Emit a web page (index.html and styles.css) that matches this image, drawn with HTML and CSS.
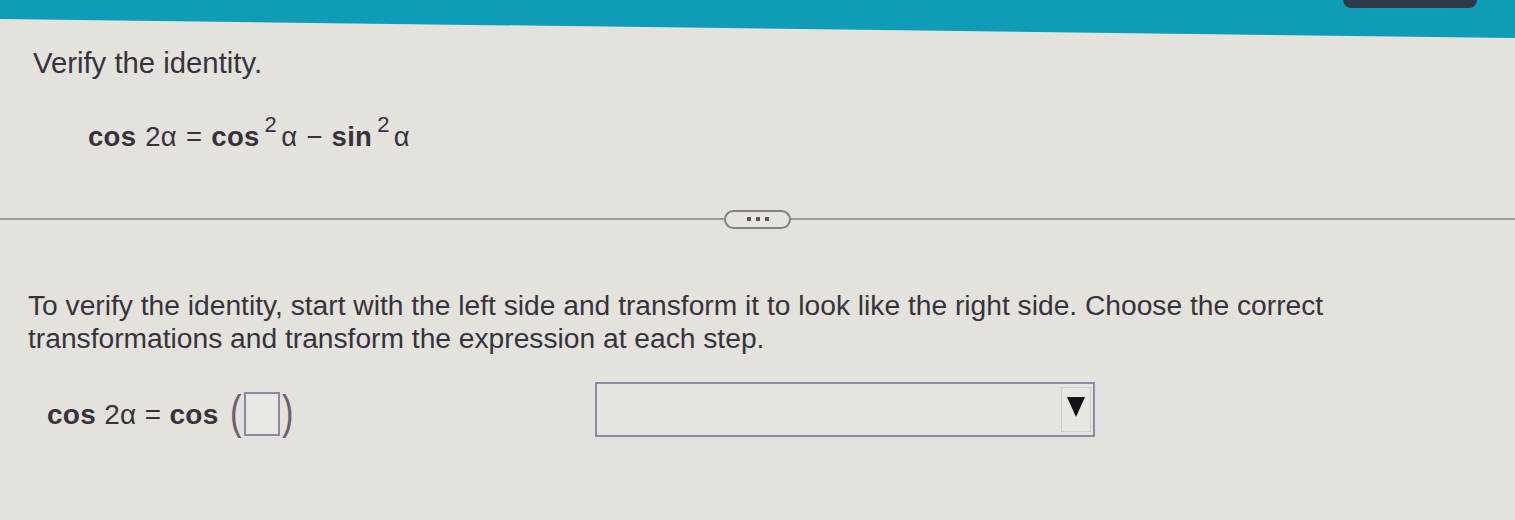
FILE: index.html
```html
<!DOCTYPE html>
<html lang="en">
<head>
<meta charset="utf-8">
<title>Verify the identity</title>
<link rel="stylesheet" href="styles.css">
</head>
<body>
<header class="topbar">
  <div class="topbtn"></div>
</header>
<main class="content">
  <section class="question">
    <p class="prompt">Verify the identity.</p>
    <p class="equation"><span class="fn">cos</span> 2α = <span class="fn">cos</span><sup>2</sup>α − <span class="fn">sin</span><sup>2</sup>α</p>
  </section>
  <div class="divider">
    <span class="line"></span>
    <button class="more" type="button" aria-label="more"><i></i><i></i><i></i></button>
    <span class="line"></span>
  </div>
  <section class="answer">
    <p class="instructions">To verify the identity, start with the left side and transform it to look like the right side. Choose the correct transformations and transform the expression at each step.</p>
    <div class="step">
      <div class="expr"><span class="fn">cos</span> 2α = <span class="fn">cos</span><span class="paren open">(</span><span class="box"></span><span class="paren">)</span></div>
      <div class="select">
        <span class="arrow"><i class="tri"></i></span>
      </div>
    </div>
  </section>
</main>
</body>
</html>
```
FILE: styles.css
```css
* { box-sizing: border-box; }
html, body { margin: 0; padding: 0; }
body {
  background: #e4e2dc;
  font-family: "Liberation Sans", Arial, sans-serif;
  color: #38323e;
  width: 1515px;
  height: 520px;
  overflow: hidden;
}
.topbar {
  height: 38px;
  background: #0f9cb6;
  clip-path: polygon(0 0, 100% 0, 100% 38px, 0 19px);
  display: flex;
  justify-content: flex-end;
  padding-right: 38px;
}
.topbtn {
  width: 134px;
  height: 8px;
  background: #2e3a47;
  border-radius: 0 0 14px 14px;
}
.content { display: flex; flex-direction: column; }
.question { padding-left: 33px; }
.prompt {
  margin: 8px 0 0;
  font-size: 29.3px;
  line-height: 34px;
}
.equation {
  margin: 40px 0 0 55px;
  font-size: 27.5px;
  line-height: 34px;
  letter-spacing: 0.3px;
  word-spacing: 1px;
}
.fn { font-weight: bold; }
.equation sup {
  font-size: 22px;
  font-weight: normal;
  line-height: 0;
  vertical-align: 14px;
  margin: 0 4px 0 5px;
}
.divider {
  display: flex;
  align-items: center;
  margin-top: 55px;
  height: 20px;
}
.divider .line {
  flex: 1;
  height: 2px;
  background: #9d9a96;
}
.more {
  width: 67px;
  height: 19px;
  border: 2px solid #857f88;
  border-radius: 10px;
  background: #e6e4df;
  display: flex;
  justify-content: center;
  align-items: center;
  gap: 5px;
  padding: 0;
}
.more i {
  width: 4px;
  height: 4px;
  background: #5e5060;
  display: block;
}
.answer { padding-left: 28px; }
.instructions {
  margin: 60px 0 0;
  font-size: 28.2px;
  line-height: 33px;
  width: 1340px;
}
.step {
  display: flex;
  align-items: flex-start;
  margin-top: 27px;
}
.expr {
  margin: 10px 0 0 19px;
  font-size: 28px;
  line-height: 46px;
  width: 548px;
  letter-spacing: 0.3px;
  white-space: nowrap;
}
.paren {
  display: inline-block;
  font-size: 46px;
  font-weight: 300;
  color: #6b6070;
  line-height: 46px;
  vertical-align: top;
  margin-top: -3px;
  transform: scaleX(0.75);
}
.paren.open { margin-left: 9px; }
.box {
  display: inline-block;
  vertical-align: top;
  width: 36px;
  height: 44px;
  border: 2px solid #8b87aa;
  background: #e9e8e3;
  margin: 0 0 0 1px;
}
.select {
  width: 500px;
  height: 55px;
  border: 2px solid #8c8aa8;
  background: #e6e4de;
  display: flex;
  justify-content: flex-end;
  align-items: center;
  padding-right: 2px;
}
.arrow {
  width: 30px;
  height: 45px;
  background: #e8e6e1;
  border: 1px solid #d2cfca;
  display: flex;
  justify-content: center;
  align-items: center;
  padding-bottom: 6px;
}
.tri {
  display: block;
  width: 0;
  height: 0;
  border-left: 9px solid transparent;
  border-right: 9px solid transparent;
  border-top: 20px solid #141218;
}
```
